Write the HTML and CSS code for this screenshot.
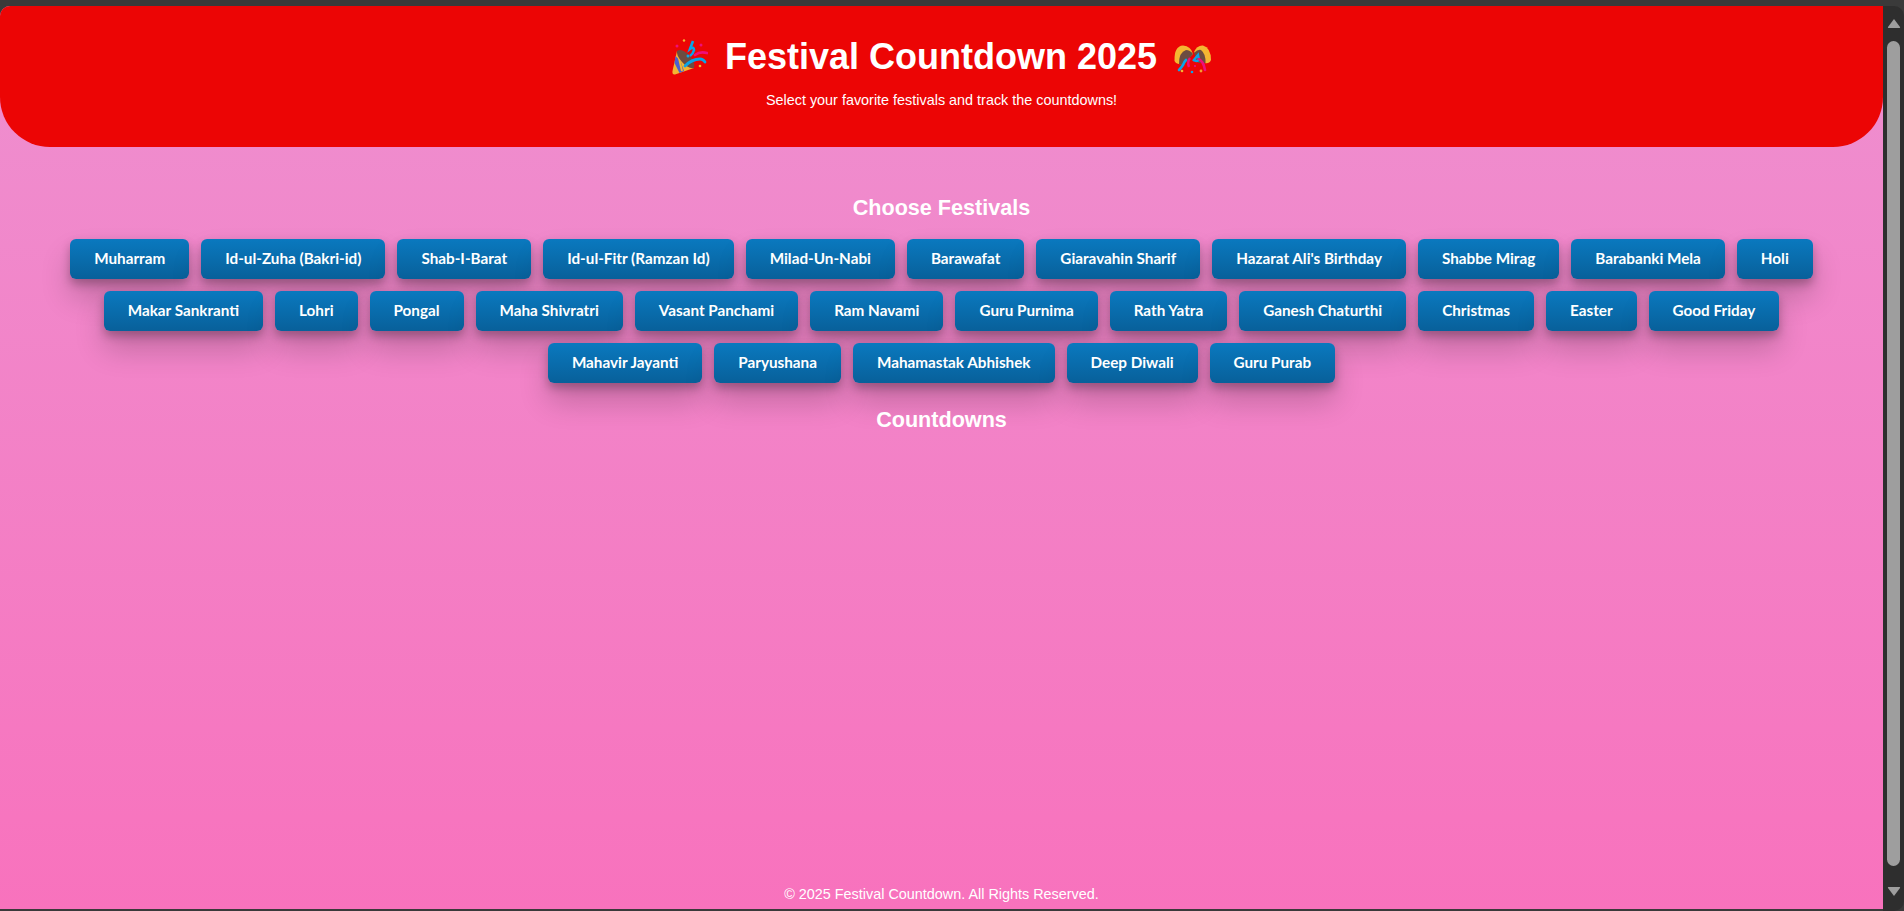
FILE: index.html
```html
<!DOCTYPE html>
<html lang="en">
<head>
    <meta charset="UTF-8">
    <meta name="viewport" content="width=device-width, initial-scale=1.0">
    <title>Festival Countdown 2025</title>
    <link rel="stylesheet" href="styles.css">
</head>
<body>
    <div class="window">
        <div class="page">
            <header class="hero">
                <h1>
                    <svg class="emoji popper" viewBox="0 0 36 36" aria-hidden="true">
                        <path d="M5 12 L22 29 L3 35.500 Q0 36 0.500 32 Z" fill="#f4b632"/>
                        <path d="M3.500 17 L8.500 22 L12 32 L7.500 34 L2.500 24 Z" fill="#4a5fd0"/>
                        <path d="M7 19 L10 32" stroke="#f4b632" stroke-width="2" fill="none"/>
                        <path d="M5 12 Q9 9 16 15 Q24 23 22 29 Q16 30 10 23 Q4 16 5 12 Z" fill="#6d4c41"/>
                        <path d="M21 2 L18 10 Q22 7 22 11 Q21 15 18 17" stroke="#0aa5e8" stroke-width="2.600" fill="none"/>
                        <path d="M23 16 Q28 12 35 14" stroke="#ee0f7a" stroke-width="2.800" fill="none" stroke-linecap="round"/>
                        <path d="M13 27 Q20 20 28 20 Q31 20 33 23" stroke="#0aa5e8" stroke-width="2.800" fill="none" stroke-linecap="round"/>
                        <circle cx="5" cy="7" r="1.500" fill="#ee0f7a"/>
                        <circle cx="12" cy="1.500" r="1.200" fill="#f4b632"/>
                        <circle cx="29" cy="6" r="1.500" fill="#ee0f7a"/>
                        <circle cx="28" cy="27" r="1.300" fill="#f4b632"/>
                        <circle cx="16" cy="17" r="1.500" fill="#0aa5e8"/>
                    </svg>
                    <span>Festival Countdown 2025</span>
                    <svg class="emoji ball" viewBox="0 0 37 36" aria-hidden="true">
                        <path d="M0.500 22 Q0 7 9 6.500 Q17 7 19 15 L9 25 Q3 26 0.500 22 Z" fill="#f4b632"/>
                        <path d="M20 13 Q23 6 29 6.500 Q37 9 37 21 Q35 25 31 24 Z" fill="#f4b632"/>
                        <path d="M5 25 Q5 13 12 11 Q16 11 19 15 L10 26 Z" fill="#6d4c41"/>
                        <path d="M20 14 Q24 10 27 11 Q32 15 31.500 24 L24 24 Z" fill="#6d4c41"/>
                        <path d="M12 21 Q10 23 9 26 Q7 29 5 31" stroke="#0aa5e8" stroke-width="2.600" fill="none" stroke-linecap="round"/>
                        <path d="M16 19 Q13 23 15 28" stroke="#ee0f7a" stroke-width="2.400" fill="none"/>
                        <path d="M19 22 L24 16 L25 21 Q22 23 20 21" stroke="#0aa5e8" stroke-width="2.400" fill="none"/>
                        <path d="M25 20 Q29 23 30 27 L31 31" stroke="#ee0f7a" stroke-width="2.600" fill="none" stroke-linecap="round"/>
                        <circle cx="18" cy="33" r="1.300" fill="#0aa5e8"/>
                        <circle cx="27" cy="32" r="1.400" fill="#f4a030"/>
                        <circle cx="8" cy="32" r="1.300" fill="#f4b632"/>
                        <circle cx="21" cy="27" r="1.100" fill="#ee0f7a"/>
                    </svg>
                </h1>
                <p>Select your favorite festivals and track the countdowns!</p>
            </header>

            <main class="content">
                <h2 class="choose-title">Choose Festivals</h2>
                <div class="festival-list">
                    <button class="festival-btn">Muharram</button>
                    <button class="festival-btn">Id-ul-Zuha (Bakri-id)</button>
                    <button class="festival-btn">Shab-I-Barat</button>
                    <button class="festival-btn">Id-ul-Fitr (Ramzan Id)</button>
                    <button class="festival-btn">Milad-Un-Nabi</button>
                    <button class="festival-btn">Barawafat</button>
                    <button class="festival-btn">Giaravahin Sharif</button>
                    <button class="festival-btn">Hazarat Ali's Birthday</button>
                    <button class="festival-btn">Shabbe Mirag</button>
                    <button class="festival-btn">Barabanki Mela</button>
                    <button class="festival-btn">Holi</button>
                    <button class="festival-btn">Makar Sankranti</button>
                    <button class="festival-btn">Lohri</button>
                    <button class="festival-btn">Pongal</button>
                    <button class="festival-btn">Maha Shivratri</button>
                    <button class="festival-btn">Vasant Panchami</button>
                    <button class="festival-btn">Ram Navami</button>
                    <button class="festival-btn">Guru Purnima</button>
                    <button class="festival-btn">Rath Yatra</button>
                    <button class="festival-btn">Ganesh Chaturthi</button>
                    <button class="festival-btn">Christmas</button>
                    <button class="festival-btn">Easter</button>
                    <button class="festival-btn">Good Friday</button>
                    <button class="festival-btn">Mahavir Jayanti</button>
                    <button class="festival-btn">Paryushana</button>
                    <button class="festival-btn">Mahamastak Abhishek</button>
                    <button class="festival-btn">Deep Diwali</button>
                    <button class="festival-btn">Guru Purab</button>
                </div>
                <h2 class="countdown-title">Countdowns</h2>
            </main>

            <footer class="footer">© 2025 Festival Countdown. All Rights Reserved.</footer>
        </div>

        <div class="scrollbar" aria-hidden="true">
            <svg class="arrow" viewBox="0 0 14 11"><path d="M7 1 L13 9 Q13.500 10 12.500 10 L1.500 10 Q0.500 10 1 9 Z" fill="#9e9e9e"/></svg>
            <div class="thumb"></div>
            <svg class="arrow" viewBox="0 0 14 11"><path d="M7 10 L13 2 Q13.500 1 12.500 1 L1.500 1 Q0.500 1 1 2 Z" fill="#9e9e9e"/></svg>
        </div>
    </div>
</body>
</html>
```

FILE: styles.css
```css
html, body {
    height: 100%;
    margin: 0;
}
body {
    overflow: hidden;
    background-color: #3a3a3a;
    font-family: 'Liberation Sans', Arial, sans-serif;
    color: white;
}
.window {
    display: flex;
    height: 100%;
    box-sizing: border-box;
    padding-top: 6px;
}
.page {
    flex: 1;
    display: flex;
    flex-direction: column;
    margin-bottom: 2px;
    border-top-left-radius: 10px;
    background: linear-gradient(to bottom, #ee90d0, #f872bd);
}
.hero {
    height: 141px;
    box-sizing: border-box;
    padding-top: 30px;
    background-color: #ec0505;
    border-radius: 10px 0 50px 50px;
    text-align: center;
}
.hero h1 {
    display: flex;
    justify-content: center;
    align-items: center;
    margin: 0;
    font-size: 36px;
    line-height: 41px;
}
.emoji {
    height: 36px;
}
.popper {
    width: 36px;
    margin-right: 17px;
}
.ball {
    width: 37px;
    margin-left: 17px;
}
.hero p {
    margin: 15px 0 0;
    font-size: 14.4px;
    line-height: 16px;
}
.content {
    padding: 0 40px;
    text-align: center;
}
.choose-title {
    margin: 47px 0 18px;
    font-size: 21.6px;
    line-height: 27px;
}
.countdown-title {
    margin: 23px 0 0;
    font-size: 21.6px;
    line-height: 27px;
}
.festival-list {
    display: flex;
    flex-wrap: wrap;
    justify-content: center;
    gap: 12px;
}
.festival-btn {
    height: 40px;
    padding: 0 24px 2px;
    border: none;
    border-radius: 6px;
    background: linear-gradient(to bottom, #0a79bf, #08609a);
    color: white;
    font-family: 'Lato', sans-serif;
    font-size: 15.25px;
    font-weight: bold;
    box-shadow: 0 5px 10px rgba(0, 0, 0, 0.25), 0 18px 30px rgba(0, 0, 0, 0.2);
}
.footer {
    margin-top: auto;
    padding-bottom: 7px;
    font-size: 14.4px;
    line-height: 16px;
    text-align: center;
}
.scrollbar {
    width: 21px;
    display: flex;
    flex-direction: column;
    align-items: center;
    padding: 12px 0 14px;
    box-sizing: border-box;
    background-color: #2e2e2e;
    border-radius: 0 10px 10px 0;
}
.arrow {
    width: 14px;
    height: 11px;
}
.thumb {
    flex: 1;
    width: 13px;
    margin: 12px 0 20px;
    background-color: #9e9e9e;
    border-radius: 7px;
}
```
